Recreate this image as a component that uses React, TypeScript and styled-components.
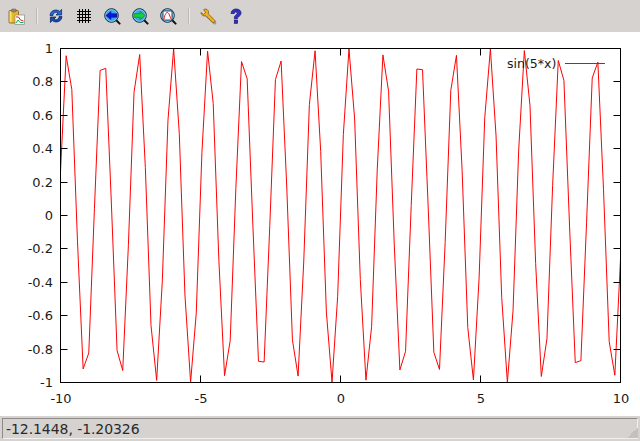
import React from "react";
import styled, { createGlobalStyle } from "styled-components";

const Global = createGlobalStyle`
  html, body { margin: 0; padding: 0; background: #d6d2d0; }
  #root { width: 640px; height: 441px; overflow: hidden; }
`;

const Window = styled.div`
  width: 640px;
  height: 441px;
  display: flex;
  flex-direction: column;
  background: #d6d2d0;
  font-family: "DejaVu Sans", sans-serif;
`;

const Toolbar = styled.div`
  height: 32px;
  flex: none;
  display: flex;
  align-items: center;
  padding-left: 2px;
  box-sizing: border-box;
`;

const ToolButton = styled.div`
  width: 28px;
  height: 32px;
  flex: none;
  display: flex;
  align-items: center;
  justify-content: center;
  svg { display: block; }
`;

const Separator = styled.div`
  width: 12px;
  height: 20px;
  flex: none;
  position: relative;
  display: flex;
  justify-content: center;
  &::before {
    content: "";
    width: 1px;
    height: 16px;
    margin-top: 2px;
    background: #bdb9b7;
    box-shadow: 1px 0 0 #eceae8;
  }
`;

const PlotArea = styled.div`
  height: 384px;
  flex: none;
  background: #fff;
  svg { display: block; }
`;

const StatusBar = styled.div`
  flex: 1;
  padding: 2px;
  box-sizing: border-box;
  display: flex;
  position: relative;
`;

const StatusFrame = styled.div`
  flex: 1;
  box-sizing: border-box;
  border: 1px solid #8e8a88;
  border-right-color: #f2f0ee;
  border-bottom-color: #f2f0ee;
  display: flex;
  align-items: center;
  padding-left: 3px;
  font-size: 14px;
  letter-spacing: -0.07px;
  color: #2a2a2a;
  white-space: nowrap;
`;

const SizeGrip = styled.div`
  position: absolute;
  right: 2px;
  bottom: 3px;
  width: 11px;
  height: 11px;
  background: linear-gradient(135deg, transparent 50%, #c4c0be 50%);
`;

const TickLabel = styled.text`
  font-family: "DejaVu Sans", sans-serif;
  font-size: 13px;
  fill: #1a1a1a;
`;

const LegendLabel = styled.text`
  font-family: "DejaVu Sans", sans-serif;
  font-size: 12.5px;
  fill: #1a1a1a;
`;

const X0 = 60.5, X1 = 620.5, Y0 = 48.5, Y1 = 382.5;
const px = (x: number) => X0 + ((x + 10) / 20) * (X1 - X0);
const py = (v: number) => Y1 - ((v + 1) / 2) * (Y1 - Y0);

const samples = Array.from({ length: 100 }, (_, i) => {
  const x = -10 + (20 * i) / 99;
  return `${px(x).toFixed(2)},${py(Math.sin(5 * x)).toFixed(2)}`;
}).join(" ");

const yTicks = [1, 0.8, 0.6, 0.4, 0.2, 0, -0.2, -0.4, -0.6, -0.8, -1];
const xTicks = [-10, -5, 0, 5, 10];

const Chart = () => (
  <svg width={640} height={384} viewBox="0 32 640 384">
    <defs>
      <clipPath id="plot-clip">
        <rect x={X0} y={Y0} width={X1 - X0} height={Y1 - Y0} />
      </clipPath>
    </defs>
    <polyline
      points={samples}
      fill="none"
      stroke="#ff0000"
      strokeWidth={1}
      strokeLinejoin="miter"
      strokeMiterlimit={30}
      clipPath="url(#plot-clip)"
    />
    <rect x={X0} y={Y0} width={X1 - X0} height={Y1 - Y0} fill="none" stroke="#000" strokeWidth={1} />
    {yTicks.map((v) => {
      const tickY = Math.round(py(v) - 0.5) + 0.5;
      return (
        <g key={v}>
          <path d={`M${X0} ${tickY}h7M${X1} ${tickY}h-7`} stroke="#000" strokeWidth={1} />
          <TickLabel x={53} y={tickY + 4.5} textAnchor="end">
            {String(v)}
          </TickLabel>
        </g>
      );
    })}
    {xTicks.map((v) => (
      <g key={v}>
        <path d={`M${px(v)} ${Y0}v7M${px(v)} ${Y1}v-7`} stroke="#000" strokeWidth={1} />
        <TickLabel x={px(v) + 0.5} y={403} textAnchor="middle">
          {v}
        </TickLabel>
      </g>
    ))}
    <LegendLabel x={507} y={68}>sin(5*x)</LegendLabel>
    <path d="M565 63.5h40" stroke="#ff0000" strokeWidth={1} />
  </svg>
);

const ClipboardIcon = () => (
  <svg width={17} height={17} viewBox="0 0 17 17">
    <rect x="1" y="2.5" width="9.5" height="12.5" rx="1" fill="#e8b820" stroke="#7a5a18" strokeWidth="0.8" />
    <rect x="1.6" y="3.2" width="2" height="11" fill="#f6de70" />
    <rect x="3.6" y="1" width="4.5" height="3" rx="0.8" fill="#8a8a80" stroke="#555" strokeWidth="0.5" />
    <rect x="7" y="7" width="9.5" height="9.5" fill="#fff" stroke="#888" strokeWidth="0.7" />
    <path d="M8 9h2.5l2 3 3 1" fill="none" stroke="#e02020" strokeWidth="1" />
    <path d="M8 15l2-3 2 2.4 3.5.2" fill="none" stroke="#10b040" strokeWidth="1" />
  </svg>
);

const RefreshIcon = () => (
  <svg width={16} height={16} viewBox="0 0 16 16">
    <path d="M2 7.5C2.2 3.8 5 2 8 2c1.700 0 2.900.6 3.700 1.400L13.600 1.400V7H8l2-2c-.5-.5-1.200-.8-2-.8-1.600 0-2.900 1.200-3.100 3.300z" fill="#2a68d8" stroke="#06205c" strokeWidth="0.7" />
    <path d="M14 8.500c-.2 3.700-3 5.500-6 5.500-1.700 0-2.900-.6-3.700-1.400L2.400 14.600V9H8l-2 2c.5.5 1.200.8 2 .8 1.600 0 2.900-1.200 3.100-3.300z" fill="#1848b8" stroke="#06205c" strokeWidth="0.7" />
  </svg>
);

const GridIcon = () => (
  <svg width={16} height={16} viewBox="0 0 16 16">
    <path d="M3.500 1v14M6.500 1v14M9.500 1v14M12.500 1v14M1 3.500h14M1 6.500h14M1 9.500h14M1 12.500h14" stroke="#000" strokeWidth="1" fill="none" />
  </svg>
);

const Lens: React.FC<{ fill: string; children: React.ReactNode }> = ({ fill, children }) => (
  <svg width={17} height={17} viewBox="0 0 17 17">
    <path d="M12 12l3.600 3.600" stroke="#111" strokeWidth="2" strokeLinecap="round" />
    <circle cx="7.500" cy="7.500" r="6.800" fill={fill} stroke="#0a2a48" strokeWidth="1" />
    <circle cx="7.500" cy="7.500" r="5.800" fill="none" stroke="#9ad8f6" strokeWidth="0.7" />
    {children}
  </svg>
);

const ArrowLeftIcon = () => (
  <Lens fill="#3ea6e6">
    <path d="M1.800 7.500L7 3.400v2.300h6v3.600H7v2.300z" fill="#0a18d0" stroke="#06107a" strokeWidth="0.5" />
  </Lens>
);

const ArrowRightIcon = () => (
  <Lens fill="#3ea6e6">
    <path d="M13.200 7.500L8 3.400v2.300H2v3.600h6v2.300z" fill="#18d038" stroke="#0a6a1a" strokeWidth="0.5" />
  </Lens>
);

const FitIcon = () => (
  <Lens fill="#5ab0e6">
    <rect x="3" y="3" width="9" height="9" fill="#fff" stroke="#223" strokeWidth="0.8" />
    <path d="M4 11c1-5 2-6.500 3.500-6.500S10 9 11 11" fill="none" stroke="#d82020" strokeWidth="1" />
  </Lens>
);

const WrenchIcon = () => (
  <svg width={17} height={17} viewBox="0 0 17 17">
    <path d="M7 7.500l7 6.500" stroke="#6a6a60" strokeWidth="3.400" strokeLinecap="round" opacity="0.5" transform="translate(0.6 0.8)" />
    <path d="M1 4.500l2.500 2 2.200-2-2-2.800C5 .6 7 1 8 2.500c.7 1.100.6 2.300.2 3.300l6.300 6.200c.7.800.6 1.600 0 2.200-.7.600-1.500.6-2.200 0L6 7.800c-1.300.4-2.800.2-3.800-.8C1.300 6.300.9 5.400 1 4.500z" fill="#f2b21c" stroke="#6a4a10" strokeWidth="0.7" />
  </svg>
);

const HelpIcon = () => (
  <svg width={16} height={17} viewBox="0 0 16 17">
    <path d="M3 5.500C3.200 2.500 5.500 1 8 1c3 0 5 1.600 5 4 0 2-1.200 2.900-2.400 3.700-.8.500-1 .9-1 1.800H6.300c0-1.800.4-2.600 1.600-3.500.9-.7 1.400-1.100 1.400-1.800 0-.8-.6-1.300-1.400-1.300-.9 0-1.500.6-1.600 1.600z" fill="#3030c8" stroke="#14146a" strokeWidth="0.7" />
    <rect x="6.300" y="12" width="3.300" height="3.300" fill="#3030c8" stroke="#14146a" strokeWidth="0.7" />
  </svg>
);

export default function App() {
  return (
    <Window>
      <Global />
      <Toolbar>
        <ToolButton><ClipboardIcon /></ToolButton>
        <Separator />
        <ToolButton><RefreshIcon /></ToolButton>
        <ToolButton><GridIcon /></ToolButton>
        <ToolButton><ArrowLeftIcon /></ToolButton>
        <ToolButton><ArrowRightIcon /></ToolButton>
        <ToolButton><FitIcon /></ToolButton>
        <Separator />
        <ToolButton><WrenchIcon /></ToolButton>
        <ToolButton><HelpIcon /></ToolButton>
      </Toolbar>
      <PlotArea>
        <Chart />
      </PlotArea>
      <StatusBar>
        <StatusFrame>-12.1448, -1.20326</StatusFrame>
        <SizeGrip />
      </StatusBar>
    </Window>
  );
}
